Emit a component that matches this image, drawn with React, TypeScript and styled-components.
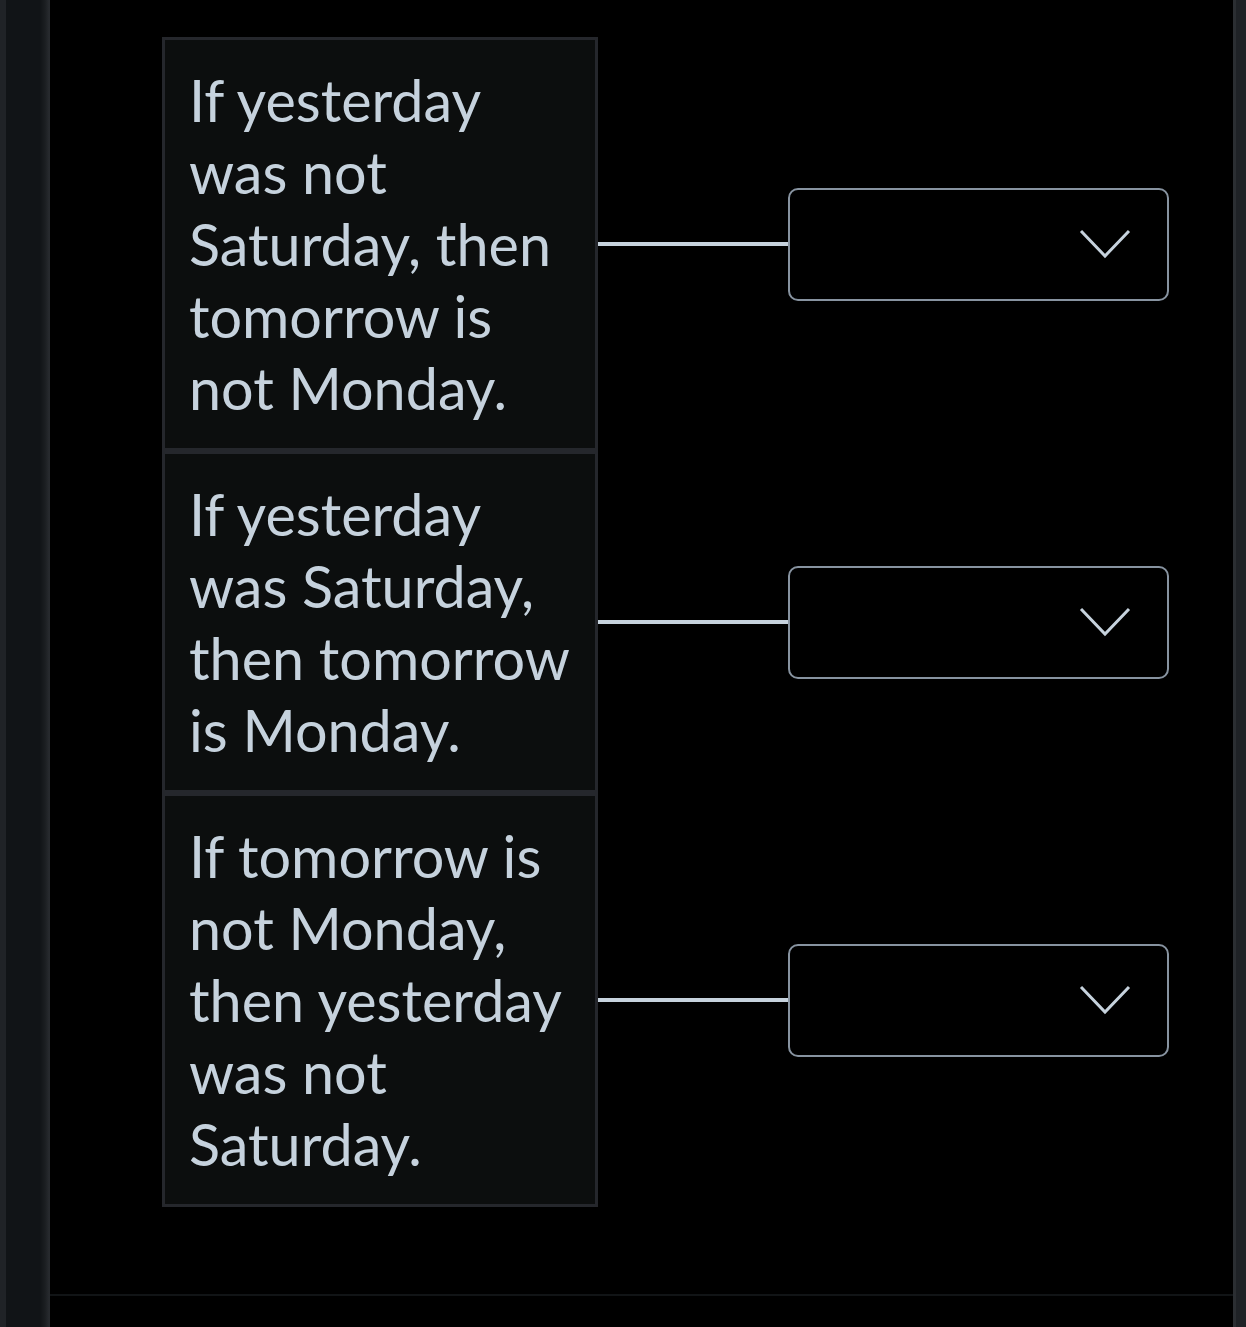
import React from "react";
import styled, { createGlobalStyle } from "styled-components";

const Global = createGlobalStyle`
  html, body { margin: 0; padding: 0; background: #000; }
  body { font-family: Lato, "Noto Sans", sans-serif; }
`;

const Page = styled.div`
  display: flex;
  width: 1246px;
  height: 1327px;
  background: #000;
  overflow: hidden;
`;

const LeftRail = styled.div`
  width: 50px;
  flex: none;
  background: linear-gradient(
    to right,
    #202327 0px,
    #202327 6px,
    #111417 6px,
    #111417 40px,
    #1b1e21 45px,
    #272a2e 49px,
    #272a2e 50px
  );
`;

const RightRail = styled.div`
  width: 13px;
  flex: none;
  background: linear-gradient(to right, #2b2e32 0px, #2b2e32 3px, #1f2226 3px, #1f2226 13px);
`;

const Main = styled.div`
  flex: 1;
  display: flex;
  flex-direction: column;
`;

const Content = styled.div`
  height: 1294px;
  box-sizing: border-box;
  padding: 37px 0 0 112px;
`;

const Footer = styled.div`
  flex: 1;
  border-top: 2px solid #111416;
`;

const List = styled.div`
  display: flex;
  flex-direction: column;
`;

const Row = styled.div`
  display: flex;
  align-items: center;
`;

const Card = styled.div`
  width: 436px;
  box-sizing: border-box;
  border: 3px solid #25272c;
  background: #0c0e0e;
  padding: 24px 18px 24px 24px;
  color: #c6d2dd;
  font-size: 57.5px;
  line-height: 72px;
  font-family: Lato, "Noto Sans", sans-serif;
`;

const Connector = styled.div`
  width: 190px;
  height: 4px;
  background: #c6d2dd;
`;

const Select = styled.div`
  width: 381px;
  height: 113px;
  box-sizing: border-box;
  border: 2px solid #8793a0;
  border-radius: 10px;
  background: #000;
  display: flex;
  align-items: center;
  justify-content: flex-end;
  padding-right: 36px;
`;

const Chevron = () => (
  <svg width="52" height="30" viewBox="0 0 52 30" fill="none">
    <path d="M2 2 L26 27 L50 2" stroke="#c6d2dd" strokeWidth="3" />
  </svg>
);

const items = [
  "If yesterday was not Saturday, then tomorrow is not Monday.",
  "If yesterday was Saturday, then tomorrow is Monday.",
  "If tomorrow is not Monday, then yesterday was not Saturday.",
];

export default function App() {
  return (
    <>
      <Global />
      <Page>
        <LeftRail />
        <Main>
          <Content>
            <List>
              {items.map((t) => (
                <Row key={t}>
                  <Card>{t}</Card>
                  <Connector />
                  <Select>
                    <Chevron />
                  </Select>
                </Row>
              ))}
            </List>
          </Content>
          <Footer />
        </Main>
        <RightRail />
      </Page>
    </>
  );
}
